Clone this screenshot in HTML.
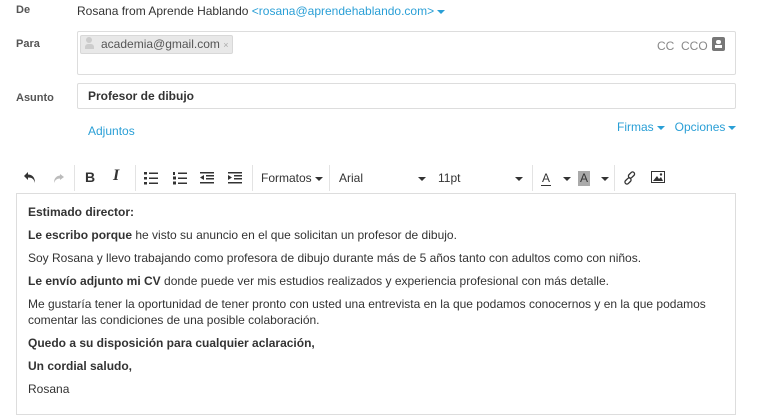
<!DOCTYPE html><html><head><style>
body{margin:0;width:768px;height:404px;overflow:hidden;background:#fff;font-family:"Liberation Sans",Arial,sans-serif;font-size:12px;color:#333;position:relative}
.a{position:absolute;white-space:nowrap}
.lbl{font-weight:bold;color:#555;font-size:11px}
.blue{color:#2a9fd6}
.box{position:absolute;border:1px solid #ddd;border-radius:2px;background:#fff}
.car{display:inline-block;width:0;height:0;border-left:4px solid transparent;border-right:4px solid transparent;border-top:4px solid currentColor;vertical-align:middle;margin-left:3px}
.sep{position:absolute;top:165px;width:1px;height:26px;background:#e3e3e3}
.tb{position:absolute;top:171px;font-size:12px;color:#333}
svg.tb{top:171px}
.p{position:absolute;left:28px;white-space:nowrap;font-size:12px;color:#333}
</style></head><body>
<div class="a lbl" style="left:16px;top:4px">De</div>
<div class="a" style="left:77px;top:4px;font-size:12px">Rosana from Aprende Hablando <span class="blue">&lt;rosana@aprendehablando.com&gt;</span><span class="blue"><span class="car"></span></span></div>
<div class="a lbl" style="left:16px;top:38px">Para</div>
<div class="box" style="left:77px;top:31px;width:657px;height:42px"></div>
<div class="a" style="left:80px;top:35px;width:151px;height:17px;background:#e8e8e8;border:1px solid #d8d8d8;border-radius:2px"></div>
<div class="a" style="left:85px;top:37px;width:9px;height:13px"><div style="width:6px;height:6px;border-radius:3px;background:#ccc;margin-left:1px"></div><div style="width:9px;height:5px;background:#ccc;border-radius:3px 3px 0 0;margin-top:1px"></div></div>
<div class="a" style="left:101px;top:37px;font-size:12px;color:#555">academia@gmail.com <span style="color:#aaa;font-size:9px">×</span></div>
<div class="a" style="left:657px;top:39px;color:#888;font-size:12px">CC&nbsp; CCO</div>
<div class="a" style="left:712px;top:37px;width:13px;height:14px;background:#777;border-radius:2px"><div style="width:5px;height:4px;border-radius:3px;background:#fff;margin:3px auto 0"></div><div style="width:7px;height:3px;background:#fff;margin:1px auto 0"></div></div>
<div class="a lbl" style="left:16px;top:92px">Asunto</div>
<div class="box" style="left:77px;top:83px;width:657px;height:24px"></div>
<div class="a" style="left:88px;top:89px;font-weight:bold;font-size:12px">Profesor de dibujo</div>
<div class="a blue" style="left:88px;top:124px">Adjuntos</div>
<div class="a blue" style="left:617px;top:120px">Firmas<span class="car"></span>&nbsp;&nbsp; Opciones<span class="car"></span></div>
<svg class="tb" style="left:23px" width="14" height="14" viewBox="0 0 14 14"><path d="M5 1 L1 5 L5 9 V6.5 C9 6.5 11 8 12 12 C12 6 9 3.5 5 3.5 Z" fill="#333"/></svg>
<svg class="tb" style="left:51px" width="14" height="14" viewBox="0 0 14 14"><path d="M9 3 L13 6 L9 9 V7.5 C6 7.5 4 9 3 12 C3 7 5.5 5 9 4.5 Z" fill="#bbb"/></svg>
<div class="sep" style="left:74px"></div>
<div class="tb" style="left:85px;font-weight:bold;font-size:14px;top:169px">B</div>
<div class="tb" style="left:113px;font-style:italic;font-family:'Liberation Serif',serif;font-size:16px;font-weight:bold;top:167px">I</div>
<div class="sep" style="left:135px"></div>
<svg class="tb" style="left:144px" width="14" height="14" viewBox="0 0 14 14" fill="#333"><rect x="0" y="1" width="3" height="2.5"/><rect x="0" y="6" width="3" height="2.5"/><rect x="0" y="11" width="3" height="2.5"/><rect x="5" y="1.5" width="9" height="1.5"/><rect x="5" y="6.5" width="9" height="1.5"/><rect x="5" y="11.5" width="9" height="1.5"/></svg>
<svg class="tb" style="left:173px" width="14" height="14" viewBox="0 0 14 14" fill="#333"><rect x="0" y="1" width="2" height="3"/><rect x="0" y="5.5" width="3" height="3"/><rect x="0" y="10.5" width="3" height="3"/><rect x="5" y="1.5" width="9" height="1.5"/><rect x="5" y="6.5" width="9" height="1.5"/><rect x="5" y="11.5" width="9" height="1.5"/></svg>
<svg class="tb" style="left:200px" width="14" height="14" viewBox="0 0 14 14" fill="#333"><rect x="0" y="1" width="14" height="1.5"/><rect x="6" y="4" width="8" height="1.5"/><rect x="6" y="7" width="8" height="1.5"/><rect x="0" y="11" width="14" height="1.5"/><path d="M0 6.5 L4 4 V9 Z"/></svg>
<svg class="tb" style="left:228px" width="14" height="14" viewBox="0 0 14 14" fill="#333"><rect x="0" y="1" width="14" height="1.5"/><rect x="6" y="4" width="8" height="1.5"/><rect x="6" y="7" width="8" height="1.5"/><rect x="0" y="11" width="14" height="1.5"/><path d="M4 6.5 L0 4 V9 Z"/></svg>
<div class="sep" style="left:252px"></div>
<div class="tb" style="left:261px">Formatos<span class="car"></span></div>
<div class="sep" style="left:329px"></div>
<div class="tb" style="left:339px">Arial</div>
<div class="tb" style="left:415px"><span class="car"></span></div>
<div class="tb" style="left:438px">11pt</div>
<div class="tb" style="left:512px"><span class="car"></span></div>
<div class="sep" style="left:532px"></div>
<div class="tb" style="left:541px;border-bottom:1px solid #333;line-height:14px;padding:0 1px">A</div><div class="tb" style="left:560px"><span class="car"></span></div>
<div class="tb" style="left:578px;background:#aaa;padding:0 2px;line-height:15px">A</div><div class="tb" style="left:598px"><span class="car"></span></div>
<div class="sep" style="left:614px"></div>
<svg class="tb" style="left:623px" width="14" height="14" viewBox="0 0 14 14" fill="none" stroke="#333" stroke-width="1.3"><rect x="6.5" y="0.5" width="4" height="7" rx="2" transform="rotate(45 8.5 4)"/><rect x="3" y="6.5" width="4" height="7" rx="2" transform="rotate(45 5 10)"/></svg>
<svg class="tb" style="left:651px" width="14" height="13" viewBox="0 0 14 13"><rect x="0.5" y="0.5" width="13" height="11" fill="#fff" stroke="#333"/><path d="M2 10 L6 5 L8 8 L10 6 L12 10 Z" fill="#333"/><circle cx="10" cy="3.5" r="1.2" fill="#333"/></svg>
<div class="box" style="left:16px;top:193px;width:718px;height:220px;border-radius:0"></div>
<div class="p" style="top:205px;font-weight:bold">Estimado director:</div>
<div class="p" style="top:228px"><b>Le escribo porque</b> he visto su anuncio en el que solicitan un profesor de dibujo.</div>
<div class="p" style="top:251px">Soy Rosana y llevo trabajando como profesora de dibujo durante más de 5 años tanto con adultos como con niños.</div>
<div class="p" style="top:274px"><b>Le envío adjunto mi CV</b> donde puede ver mis estudios realizados y experiencia profesional con más detalle.</div>
<div class="p" style="top:297px">Me gustaría tener la oportunidad de tener pronto con usted una entrevista en la que podamos conocernos y en la que podamos</div>
<div class="p" style="top:313px">comentar las condiciones de una posible colaboración.</div>
<div class="p" style="top:336px;font-weight:bold">Quedo a su disposición para cualquier aclaración,</div>
<div class="p" style="top:359px;font-weight:bold">Un cordial saludo,</div>
<div class="p" style="top:382px">Rosana</div>
</body></html>
